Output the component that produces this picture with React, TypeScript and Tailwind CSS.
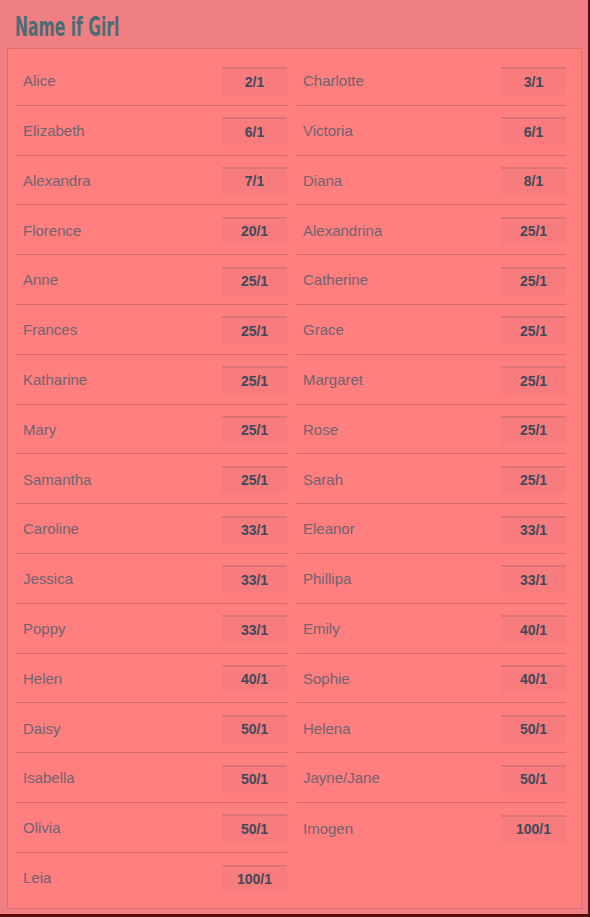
const left: [string, string][] = [
  ["Alice", "2/1"],
  ["Elizabeth", "6/1"],
  ["Alexandra", "7/1"],
  ["Florence", "20/1"],
  ["Anne", "25/1"],
  ["Frances", "25/1"],
  ["Katharine", "25/1"],
  ["Mary", "25/1"],
  ["Samantha", "25/1"],
  ["Caroline", "33/1"],
  ["Jessica", "33/1"],
  ["Poppy", "33/1"],
  ["Helen", "40/1"],
  ["Daisy", "50/1"],
  ["Isabella", "50/1"],
  ["Olivia", "50/1"],
  ["Leia", "100/1"],
];

const right: [string, string][] = [
  ["Charlotte", "3/1"],
  ["Victoria", "6/1"],
  ["Diana", "8/1"],
  ["Alexandrina", "25/1"],
  ["Catherine", "25/1"],
  ["Grace", "25/1"],
  ["Margaret", "25/1"],
  ["Rose", "25/1"],
  ["Sarah", "25/1"],
  ["Eleanor", "33/1"],
  ["Phillipa", "33/1"],
  ["Emily", "40/1"],
  ["Sophie", "40/1"],
  ["Helena", "50/1"],
  ["Jayne/Jane", "50/1"],
  ["Imogen", "100/1"],
];

function OddsColumn({ rows }: { rows: [string, string][] }) {
  return (
    <div className="flex flex-col">
      {rows.map(([name, odds], i) => (
        <div
          key={name}
          className={`flex h-[49.8px] items-center justify-between pt-[2px] ${
            i < rows.length - 1 ? "border-b border-[#d66b6f]" : ""
          }`}
        >
          <span className="pl-[7px] text-[15px] text-[#6f6470]">{name}</span>
          <span className="flex h-[28px] w-[65px] items-center justify-center border-t-2 border-[#dc7376] bg-[#f87b7d] text-[14px] font-bold text-[#404a5a]">
            {odds}
          </span>
        </div>
      ))}
    </div>
  );
}

export default function App() {
  return (
    <div className="flex h-[917px] w-[590px] border-r-2 border-[#5a0a10] bg-[#ef7f82] font-['Liberation_Sans',Arial,sans-serif]">
      <div className="flex flex-1 flex-col">
        <div className="flex h-[48px] items-center px-[15px] pt-[5px]">
          <h2 className="origin-left scale-x-[0.64] font-['Liberation_Sans_Narrow','DejaVu_Sans_Condensed',sans-serif] text-[27px] font-bold leading-none whitespace-nowrap text-[#4a6d73]">
            Name if Girl
          </h2>
        </div>
        <div className="ml-[7px] h-[861px] w-[575px] border border-[#dc7074] bg-[#ff7f7f] pl-[8px] pr-[15px] pt-[7px]">
          <div className="grid grid-cols-[271px_270px] gap-x-[9px]">
            <OddsColumn rows={left} />
            <OddsColumn rows={right} />
          </div>
        </div>
        <div className="mt-auto h-[3px] bg-[#5a0a10]" />
      </div>
    </div>
  );
}
